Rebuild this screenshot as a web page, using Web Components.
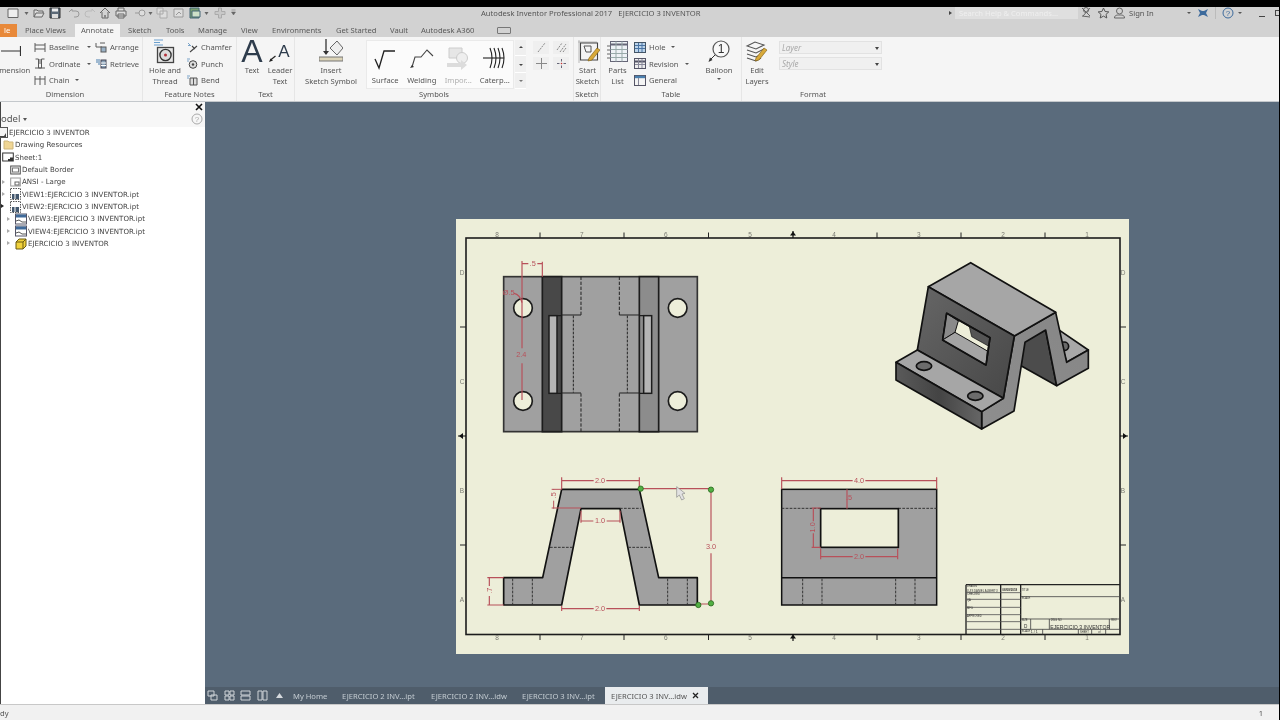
<!DOCTYPE html>
<html>
<head>
<meta charset="utf-8">
<title>Autodesk Inventor Professional 2017</title>
<style>
  html, body { margin: 0; padding: 0; background: #000; overflow: hidden; }
</style>
</head>
<body>
<inv-app>
  <inv-titlebar slot="title"></inv-titlebar>
  <inv-tabs slot="tabs"></inv-tabs>
  <inv-ribbon slot="ribbon">
    <inv-panel label="Dimension" labelw="130" style="width:143px">
      <inv-big label="Dimension" style="width:38px;margin-left:-8px"><inv-icon name="dimension"></inv-icon></inv-big>
      <inv-stack style="width:61px;margin-left:4px">
        <inv-small label="Baseline" icon="baseline" caret="8"></inv-small>
        <inv-small label="Ordinate" icon="ordinate" caret="6"></inv-small>
        <inv-small label="Chain" icon="chain" caret="6"></inv-small>
      </inv-stack>
      <inv-stack>
        <inv-small label="Arrange" icon="arrange"></inv-small>
        <inv-small label="Retrieve" icon="retrieve"></inv-small>
      </inv-stack>
    </inv-panel>
    <inv-panel label="Feature Notes" style="width:94px">
      <inv-big label="Hole and|Thread" style="width:44px"><inv-icon name="hole"></inv-icon></inv-big>
      <inv-stack>
        <inv-small label="Chamfer" icon="chamfer"></inv-small>
        <inv-small label="Punch" icon="punch"></inv-small>
        <inv-small label="Bend" icon="bend"></inv-small>
      </inv-stack>
    </inv-panel>
    <inv-panel label="Text" style="width:58px">
      <inv-big label="Text" style="width:30px"><inv-bigletter></inv-bigletter></inv-big>
      <inv-big label="Leader|Text" style="width:26px"><inv-icon name="leader"></inv-icon></inv-big>
    </inv-panel>
    <inv-panel label="Symbols" style="width:279px">
      <inv-big label="Insert|Sketch Symbol" style="width:70px;margin-left:1px"><inv-icon name="symbol"></inv-icon></inv-big>
      <inv-gallery>
        <inv-gallery-item label="Surface" icon="surface"></inv-gallery-item>
        <inv-gallery-item label="Welding" icon="welding"></inv-gallery-item>
        <inv-gallery-item label="Impor..." icon="import" disabled></inv-gallery-item>
        <inv-gallery-item label="Caterp..." icon="caterpillar"></inv-gallery-item>
      </inv-gallery>
      <inv-minigrid>
        <inv-icon name="mini1"></inv-icon><inv-icon name="mini2"></inv-icon>
        <inv-icon name="mini3"></inv-icon><inv-icon name="mini4"></inv-icon>
      </inv-minigrid>
    </inv-panel>
    <inv-panel label="Sketch" style="width:27px">
      <inv-big label="Start|Sketch" style="width:27px"><inv-icon name="sketch"></inv-icon></inv-big>
    </inv-panel>
    <inv-panel label="Table" style="width:141px">
      <inv-big label="Parts|List" style="width:33px"><inv-icon name="parts"></inv-icon></inv-big>
      <inv-stack style="width:65px">
        <inv-small label="Hole" icon="tblhole" caret="6"></inv-small>
        <inv-small label="Revision" icon="tblrev" caret="6"></inv-small>
        <inv-small label="General" icon="tblgen"></inv-small>
      </inv-stack>
      <inv-big label="Balloon" caret style="width:40px"><inv-icon name="balloon"></inv-icon></inv-big>
    </inv-panel>
    <inv-panel label="Format" style="width:142px;border:0">
      <inv-big label="Edit|Layers" style="width:30px"><inv-icon name="layers"></inv-icon></inv-big>
      <inv-stack combo style="margin-left:7px">
        <inv-combo label="Layer"></inv-combo>
        <inv-combo label="Style"></inv-combo>
      </inv-stack>
    </inv-panel>
  </inv-ribbon>
  <inv-browser slot="browser">
    <inv-row text="EJERCICIO 3 INVENTOR" indent="-2" icon="tdoc"></inv-row>
    <inv-row text="Drawing Resources" indent="2" icon="tfolder"></inv-row>
    <inv-row text="Sheet:1" indent="1" icon="tsheet"></inv-row>
    <inv-row text="Default Border" indent="9" icon="tborder"></inv-row>
    <inv-row text="ANSI - Large" indent="9" icon="tansi" exp="open"></inv-row>
    <inv-row text="VIEW1:EJERCICIO 3 INVENTOR.ipt" indent="9" icon="tview" exp="open"></inv-row>
    <inv-row text="VIEW2:EJERCICIO 3 INVENTOR.ipt" indent="9" icon="tview" exp="filled"></inv-row>
    <inv-row text="VIEW3:EJERCICIO 3 INVENTOR.ipt" indent="14" icon="tview2" exp="open"></inv-row>
    <inv-row text="VIEW4:EJERCICIO 3 INVENTOR.ipt" indent="14" icon="tview2" exp="open"></inv-row>
    <inv-row text="EJERCICIO 3 INVENTOR" indent="14" icon="tpart" exp="open"></inv-row>
  </inv-browser>
  <inv-canvas slot="canvas">
    <inv-sheet></inv-sheet>
    <inv-doctabs slot="tabs">
      <inv-doctab style="width:49px">My Home</inv-doctab>
      <inv-doctab style="width:89px">EJERCICIO 2 INV...ipt</inv-doctab>
      <inv-doctab style="width:91px">EJERCICIO 2 INV...idw</inv-doctab>
      <inv-doctab style="width:88px">EJERCICIO 3 INV...ipt</inv-doctab>
      <inv-doctab active style="width:103px">EJERCICIO 3 INV...idw</inv-doctab>
    </inv-doctabs>
  </inv-canvas>
  <inv-status slot="status"></inv-status>
</inv-app>

<script>
const UI_FONT = `"Noto Sans", "Liberation Sans", sans-serif`;
const UI_SIZE = "7.6px";

/*************************** ICONS ***************************/
const G = "#5a5a5a";
const B = "#4a7fae";
const ICONS = {
  dimension: [20, 14, `<path d="M0 7h19M19.5 2v10" stroke="#333" stroke-width="1.2" fill="none"/>`],
  baseline: [12, 11, `<path d="M1 1v9M11 1v9M1 3h10M1 7h10" stroke="${G}" fill="none"/>`],
  ordinate: [12, 11, `<path d="M1.5 1h3v9h3V1h3M1 10h10M6 1v5" stroke="${G}" fill="none"/>`],
  chain: [12, 11, `<path d="M1 1v9M6 1v9M11 1v9M1 4h10" stroke="${G}" fill="none"/>`],
  arrange: [12, 11, `<path d="M1 1v4h6M5 1h5" stroke="${G}" fill="none"/><rect x="6" y="5" width="5" height="5" fill="#9bb3c8" stroke="${G}"/>`],
  retrieve: [12, 11, `<path d="M1 2h4M1 4h4M3 6h2" stroke="${B}" stroke-width="1.2"/><rect x="6" y="2" width="5" height="8" fill="#8aa2b8" stroke="#445"/><path d="M6 5h5M6 7.5h5" stroke="#fff"/>`],
  hole: [24, 27, `<path d="M1 2h9M1 4.5h6M1 7h9" stroke="#6aa0cf" stroke-width="1.2"/><rect x="4.5" y="9.5" width="16" height="15" fill="#e5e5e5" stroke="#444" stroke-width="1.3"/><circle cx="12.5" cy="17" r="5.6" fill="#ddd" stroke="#333" stroke-width="1.4"/><circle cx="12.5" cy="17" r="1.5" fill="#b5303a"/>`],
  chamfer: [11, 11, `<path d="M1 1l2 2M1 3.5h3" stroke="#7aa3c8"/><path d="M3 10l7-6M5 4l3 3" stroke="#444" stroke-width="1.1" fill="none"/>`],
  punch: [11, 11, `<path d="M0 1h3M0 3h2" stroke="#7aa3c8"/><circle cx="6" cy="6.5" r="3.8" fill="#ddd" stroke="#444"/><circle cx="6" cy="6.5" r="1.2" fill="#444"/>`],
  bend: [11, 11, `<path d="M0 1h3M0 3h2" stroke="#7aa3c8"/><path d="M3 3h7v7H3zM6.5 3v7" stroke="#555" fill="#ddd"/>`],
  leader: [24, 27, `<path d="M2.5 22l5-4" stroke="#222" stroke-width="1.2"/><path d="M1 24l1.500-3.500 2.500 2z" fill="#222"/><text x="16" y="19" font-size="17" text-anchor="middle" font-family="Liberation Sans" fill="#2e3c4c">A</text>`],
  symbol: [24, 27, `<path d="M7 1v15" stroke="#333" stroke-width="1.3"/><path d="M4 13l3 4 3-4" fill="#333"/><path d="M11 10l7-7 6 7-6 7z" fill="#eee" stroke="#666"/><rect x="0" y="19" width="24" height="4" fill="#dcd4b8" stroke="#777"/>`],
  surface: [24, 24, `<path d="M2 13l4 9 5-17h11" stroke="#222" stroke-width="1.3" fill="none"/>`],
  welding: [24, 24, `<path d="M2 21l3-10h6l6-7 6 6" stroke="#444" stroke-width="1.1" fill="none"/><path d="M0 22l2-3 2 2z" fill="#333"/>`],
  import: [24, 24, `<path d="M3 2h13v10H3z" fill="#e6e6e6" stroke="#ccc"/><circle cx="16" cy="12" r="5.5" fill="#eee" stroke="#ccc"/><path d="M1 17h14v-3l6 5-6 5v-3H1z" fill="#dcdcdc"/>`],
  caterpillar: [24, 24, `<path d="M0 12h21" stroke="#222" stroke-width="1.1"/><path d="M7 2q4 10 0 20M11 2q4 10 0 20M15 2q4 10 0 20M19 2q4 10 0 20" stroke="#222" stroke-width="1.1" fill="none"/>`],
  mini1: [11, 11, `<path d="M2 10l7-9" stroke="#888" stroke-dasharray="2 1"/>`],
  mini2: [11, 11, `<path d="M1 8l5-7M4 10l6-8M7 10l3-4" stroke="#888" stroke-dasharray="2 1"/>`],
  mini3: [11, 11, `<path d="M5.5 0v11M0 5.5h11" stroke="#888"/>`],
  mini4: [11, 11, `<path d="M5.5 1v2.5M5.5 7.5V10M1 5.5h2.5M7.5 5.5H10" stroke="#667"/><circle cx="5.5" cy="5.5" r=".8" fill="#c33"/>`],
  sketch: [24, 27, `<path d="M2 4h19M3 2v23" stroke="#aaa" stroke-width=".8"/><path d="M4.5 5h17v17h-17z" fill="#f4f4f4" stroke="#444" stroke-width="1.1"/><path d="M8 8h7v6H10z" fill="none" stroke="#555"/><path d="M13 20l8-10 3 2-8 10-4 1z" fill="#d8a93a" stroke="#7a5a10" stroke-width=".6"/>`],
  parts: [21, 25, `<path d="M0 7h3M0 11h3M0 15h3M0 19h3" stroke="#666"/><rect x="3.5" y="2.500" width="17" height="20" fill="#eef2f6" stroke="#667"/><path d="M3 5.500h18" stroke="#667" stroke-width="2"/><path d="M3.500 10.500h17M3.500 14.500h17M3.500 18.500h17M9 2.500v20M15 2.500v20" stroke="#9aa"/>`],
  tblhole: [12, 11, `<rect x=".5" y=".5" width="11" height="10" fill="#bcd4ea" stroke="#456"/><path d="M1 3.5h10M1 6.5h10M4.5 1v9M8 1v9" stroke="#4a74a4"/>`],
  tblrev: [12, 11, `<rect x=".5" y=".5" width="11" height="10" fill="#eee" stroke="#556"/><path d="M1 3.5h10" stroke="#556" stroke-width="2"/><path d="M1 6.5h10M4.5 1v9M8 1v9" stroke="#889"/>`],
  tblgen: [12, 11, `<rect x=".5" y=".5" width="11" height="10" fill="#f4f4f4" stroke="#556"/><path d="M1 2h10" stroke="#4a7fae" stroke-width="2.4"/><path d="M4.5 3v7" stroke="#889"/>`],
  balloon: [26, 27, `<circle cx="15" cy="11" r="8" fill="#f8f8f8" stroke="#555" stroke-width="1.2"/><text x="15" y="15" font-size="12" font-family="Liberation Sans" text-anchor="middle" fill="#333">1</text><path d="M9 17l-4 4" stroke="#333"/><path d="M2.500 24l1.500-4.500 2.500 2.500z" fill="#333"/>`],
  layers: [24, 27, `<path d="M2 8l8-4 9 3-8 4zM2 12l9 3 8-4M2 16l9 3 8-4M2 20l9 3 5-3" fill="none" stroke="#555" stroke-width="1.1"/><path d="M11 20l8-10 3 2-8 10-4 1z" fill="#d8a93a" stroke="#7a5a10" stroke-width=".6"/>`],
  tdoc: [9, 11, `<rect x=".5" y=".5" width="8" height="10" fill="#f4f4f4" stroke="#555"/><path d="M1 9h4l2-3v4H1z" fill="#444"/>`],
  tfolder: [11, 11, `<path d="M1 2h4l1 1h4v7H1z" fill="#f0d694" stroke="#cdb57a"/>`],
  tsheet: [12, 10, `<rect x=".7" y="1" width="10.6" height="8" fill="#fff" stroke="#333" stroke-width="1"/><path d="M6 9V7h2V5.500h3V9z" fill="#333"/>`],
  tborder: [11, 10, `<rect x=".7" y="1" width="9.6" height="8" fill="#eee" stroke="#555"/><rect x="2.500" y="3" width="6" height="4" fill="#fff" stroke="#777"/>`],
  tansi: [11, 10, `<rect x=".7" y="1" width="9.600" height="8" fill="#fff" stroke="#999"/><rect x="5" y="5" width="4" height="3" fill="none" stroke="#666"/>`],
  tview: [11, 12, `<rect x=".5" y=".5" width="10" height="11" fill="#fff" stroke="#555" stroke-dasharray="1.500 1"/><path d="M2 6h7v5H2z" fill="#44586e"/><path d="M5 6v5" stroke="#fff"/>`],
  tview2: [12, 12, `<rect x=".5" y="1" width="11" height="10" fill="#fff" stroke="#556"/><path d="M1 1.500h10v3H1z" fill="#3f6a9a"/><path d="M1 8l3-1 3 2h4" stroke="#555" fill="none"/>`],
  tpart: [12, 12, `<path d="M1 4l3-3h7v7l-3 3H1z" fill="#f1d23c" stroke="#6a5a10"/><path d="M1 4h7v7M8 4l3-3" fill="none" stroke="#6a5a10"/>`],
  close: [8, 8, `<path d="M1 1l6 6M7 1l-6 6" stroke="#111" stroke-width="1.600"/>`],
  help: [12, 12, `<circle cx="6" cy="6" r="5" fill="none" stroke="#aaa"/><text x="6" y="9" font-size="8" text-anchor="middle" font-family="Liberation Sans" fill="#aaa">?</text>`],
};

class InvElement extends HTMLElement {
  constructor() {
    super();
    this.attachShadow({ mode: "open" });
  }
  get style_() { return ""; }
  get markup() { return "<slot></slot>"; }
  connectedCallback() {
    this.shadowRoot.innerHTML = `<style>${this.style_}</style>${this.markup}`;
  }
}

const svgIcon = (name) => {
  const [w, h, inner] = ICONS[name];
  return `<svg width="${w}" height="${h}" viewBox="0 0 ${w} ${h}" style="display:block;flex:none">${inner}</svg>`;
};

customElements.define("inv-icon", class extends InvElement {
  get style_() { return `:host{display:block;flex:none}`; }
  get markup() { return svgIcon(this.getAttribute("name")); }
});

/*************************** APP SHELL ***************************/
customElements.define("inv-app", class extends InvElement {
  get style_() {
    return `
      :host {
        display: grid;
        width: 1279px;
        height: 720px;
        grid-template-columns: 205px 1fr;
        grid-template-rows: 7px 17px 13px 65px 1fr 16px;
        grid-template-areas: "top top" "title title" "tabs tabs" "ribbon ribbon" "browser canvas" "status status";
        font-family: ${UI_FONT};
        color: #4a4a4a;
        filter: blur(.35px);
        background: #000;
      }
      ::slotted([slot=title]) { grid-area: title; }
      ::slotted([slot=tabs]) { grid-area: tabs; }
      ::slotted([slot=ribbon]) { grid-area: ribbon; }
      ::slotted([slot=browser]) { grid-area: browser; }
      ::slotted([slot=canvas]) { grid-area: canvas; }
      ::slotted([slot=status]) { grid-area: status; }
    `;
  }
  get markup() {
    return `<slot name="title"></slot><slot name="tabs"></slot><slot name="ribbon"></slot>
      <slot name="browser"></slot><slot name="canvas"></slot><slot name="status"></slot>`;
  }
});

customElements.define("inv-titlebar", class extends InvElement {
  get style_() {
    return `
      :host { display: flex; align-items: center; background: #d2d2d2; font-size: ${UI_SIZE}; color: #555; padding-bottom: 5px; box-sizing: border-box; overflow: hidden; }
      .qat { display: flex; align-items: center; width: 481px; box-sizing: border-box; flex: none; }
      .qat svg { display: block; flex: none; }
      .title { width: 468px; flex: none; white-space: pre; }
      .search { width: 123px; height: 12px; background: #dfdfdf; color: #efefef; padding-left: 4px; box-sizing: border-box; line-height: 12px; margin-left: 3px; flex: none; }
      .arrow { width: 0; height: 0; border-left: 3px solid #444; border-top: 2.500px solid transparent; border-bottom: 2.500px solid transparent; flex: none; }
      .right { display: flex; align-items: center; flex: none; white-space: nowrap; }
      .right svg { display: block; flex: none; }
      .dot { width: 0; height: 0; border: 2px solid transparent; border-top: 2.500px solid #555; margin-top: 2px; flex: none; }
    `;
  }
  get markup() {
    const s = (w, ml, inner) => `<svg width="${w}" height="12" viewBox="0 0 ${w} 12" style="margin-left:${ml}px">${inner}</svg>`;
    const car = (ml) => s(5, ml, `<path d="M.5 5h4L2.500 8z" fill="#666"/>`);
    return `
      <div class="qat">
        ${s(12, 7, `<path d="M1 2h10v8.500H1z" fill="#eee" stroke="#666"/>`)}${car(4.5)}
        ${s(12, 4.5, `<path d="M1 10V3h3l1 1h5v2M1 10l2-4h8l-2 4z" fill="#ddd" stroke="#666"/>`)}
        ${s(12, 4, `<path d="M1 1h10v10H1z" fill="#5c6a78" stroke="#333"/><path d="M3 1.500h6v3H3z" fill="#eee"/><path d="M3 7h6v4H3z" fill="#ddd"/>`)}
        ${s(12, 7, `<path d="M1 5l3-3v2h4a3 3 0 010 6H6" fill="none" stroke="#999"/>`)}
        ${s(12, 4, `<path d="M11 5L8 2v2H4a3 3 0 000 6h2" fill="none" stroke="#bbb"/>`)}
        ${s(12, 3, `<path d="M1 6l5-5 5 5M3 5v6h6V5" fill="none" stroke="#666"/><path d="M5 11V8h2v3" fill="#888"/>`)}
        ${s(12, 4, `<path d="M3 4V1h6v3M1 4h10v5H1zM3 7h6v4H3z" fill="#ddd" stroke="#666"/>`)}
        ${s(12, 7, `<path d="M1 6h4" stroke="#999"/><circle cx="8" cy="6" r="3" fill="#ddd" stroke="#999"/>`)}${car(1.5)}
        ${s(12, 3.5, `<path d="M1 1h6v6H1zM4 4h7v7H4z" fill="#ddd" stroke="#aaa"/>`)}
        ${s(12, 5, `<path d="M1 2h9v8H1z" fill="#ddd" stroke="#999"/><path d="M3 8l3-3 2 2" fill="none" stroke="#999"/>`)}
        ${s(12, 4, `<path d="M1 1h9v10H1z" fill="#7aa070" stroke="#467"/><path d="M3 4h8v6H3z" fill="#cde0c8" stroke="#467"/>`)}${car(2.5)}
        ${s(12, 5.5, `<path d="M4.500 1h3v3.500H11v3H7.500V11h-3V7.500H1v-3h3.500z" fill="#c8c8c8" stroke="#aaa"/>`)}
        ${s(5, 4.5, `<path d="M.5 3h4M.5 5h4L2.500 8z" fill="#666" stroke="#666" stroke-width=".5"/>`)}
      </div>
      <div class="title">Autodesk Inventor Professional 2017   EJERCICIO 3 INVENTOR</div>
      <div class="arrow"></div>
      <div class="search">Search Help &amp; Commands...</div>
      <div class="right">
        ${s(13, 1.5, `<circle cx="6" cy="3" r="2.500" fill="none" stroke="#666"/><path d="M2 1l8 8M2 9l8 1M10 1L3 9" stroke="#666" fill="none"/>`)}
        ${s(13, 4, `<path d="M6.500 1l1.600 3.500 3.700.4-2.800 2.500.8 3.600-3.300-1.900-3.300 1.900.8-3.600L1.200 4.900l3.700-.4z" fill="none" stroke="#555"/>`)}
        ${s(13, 3, `<circle cx="6.500" cy="4" r="3" fill="none" stroke="#666"/><path d="M1.500 11c0-3 2.500-3 5-3s5 0 5 3z" fill="none" stroke="#666"/>`)}
        <span style="margin-left:3.500px;width:58px">Sign In</span>
        <span class="dot"></span>
        ${s(12, 6, `<path d="M1 2l4 2 2 0 4-2-2 4 2 4-4-2H5l-4 2 2-4z" fill="#3c6a9c"/>`)}
        <span style="width:1px;height:12px;background:#bbb;margin-left:6px"></span>
        ${s(12, 6, `<circle cx="6" cy="6" r="5" fill="none" stroke="#3c6a9c"/><text x="6" y="9" font-size="8" text-anchor="middle" fill="#3c6a9c" font-family="Liberation Sans">?</text>`)}
        <span class="dot" style="margin-left:4px"></span>
        <span style="width:6px;height:1px;background:#444;margin:6px 0 0 17px"></span>
        <span style="width:5px;height:6px;border:1px solid #444;margin-left:10px;box-sizing:border-box"></span>
      </div>
    `;
  }
});

customElements.define("inv-tabs", class extends InvElement {
  get style_() {
    return `
      :host { display: flex; background: #d2d2d2; font-size: ${UI_SIZE}; color: #5a5a5a; align-items: stretch; line-height: 12px; white-space: nowrap; }
      .file { width: 17px; background: #e8893a; color: #fff; padding-left: 4px; box-sizing: border-box; margin-right: 8px; }
      span { display: block; }
      .on { background: #f5f5f5; padding: 0 6px; }
      .icon { margin: 3px 0 0 21px; width: 14px; height: 7px; border: 1px solid #777; border-radius: 1px; box-sizing: border-box; }
    `;
  }
  get markup() {
    const tabs = [["Place Views", 50, 0], ["Annotate", 45, 0, true], ["Sketch", 38, 8], ["Tools", 32, 0], ["Manage", 43, 0], ["View", 31, 0], ["Environments", 64, 0], ["Get Started", 54, 0], ["Vault", 31, 0], ["Autodesk A360", 55, 0]];
    return `<span class="file">le</span>` + tabs.map(([t, w, ml, on]) =>
      `<span class="${on ? "on" : ""}" style="width:${w}px;box-sizing:border-box;${ml ? `margin-left:${ml}px` : ""}">${t}</span>`).join("")
      + `<span class="icon"></span>`;
  }
});

/*************************** RIBBON ***************************/
customElements.define("inv-ribbon", class extends InvElement {
  get style_() {
    return `:host { display: flex; background: #f5f5f5; border-bottom: 1px solid #c4c8cc; box-sizing: border-box; overflow: hidden; }`;
  }
});

customElements.define("inv-panel", class extends InvElement {
  get style_() {
    return `
      :host { display: grid; grid-template-rows: 52px 12px; flex: none; box-sizing: border-box; border-right: 1px solid #e6e6e6; }
      .body { display: flex; min-width: 0; }
      .label { text-align: center; font-size: ${UI_SIZE}; line-height: 11px; color: #555; white-space: nowrap; }
    `;
  }
  get markup() {
    const lw = this.getAttribute("labelw");
    return `<div class="body"><slot></slot></div><div class="label" ${lw ? `style="width:${lw}px"` : ""}>${this.getAttribute("label")}</div>`;
  }
});

customElements.define("inv-big", class extends InvElement {
  get style_() {
    return `
      :host { display: flex; flex-direction: column; align-items: center; flex: none; font-size: ${UI_SIZE}; line-height: 10.500px; text-align: center; color: #555; white-space: nowrap; }
      .ico { height: 28px; display: flex; align-items: center; justify-content: center; }
      .car { width: 0; height: 0; border: 2px solid transparent; border-top: 2.500px solid #555; margin-top: 2px; }
    `;
  }
  get markup() {
    const caret = this.hasAttribute("caret") ? `<div class="car"></div>` : "";
    const label = this.getAttribute("label").split("|").join("<br>");
    return `<div class="ico"><slot></slot></div><div>${label}</div>${caret}`;
  }
});

customElements.define("inv-bigletter", class extends InvElement {
  get style_() { return `:host{display:block;font:32px/30px "Liberation Sans",sans-serif;color:#2e3c4c}`; }
  get markup() { return "A"; }
});

customElements.define("inv-stack", class extends InvElement {
  get style_() {
    return `:host { display: flex; flex-direction: column; flex: none; padding-top: 2px; }
      :host([combo]) { gap: 3px; padding-top: 4px; }`;
  }
});

customElements.define("inv-small", class extends InvElement {
  get style_() {
    return `
      :host { display: flex; align-items: center; height: 16.500px; gap: 3px; font-size: ${UI_SIZE}; color: #555; white-space: nowrap; }
      .car { width: 0; height: 0; border: 2px solid transparent; border-top: 2.500px solid #555; margin-top: 2px; }
    `;
  }
  get markup() {
    const caret = this.getAttribute("caret");
    return svgIcon(this.getAttribute("icon")) + `<span>${this.getAttribute("label")}</span>`
      + (caret ? `<span class="car" style="margin-left:${caret - 3}px"></span>` : "");
  }
});

customElements.define("inv-gallery", class extends InvElement {
  get style_() {
    return `
      :host { display: flex; flex: none; }
      .box { width: 148px; height: 49px; margin-top: 3px; background: #fbfbfb; border: 1px solid #eaeaea; box-sizing: border-box; display: flex; }
      .scroll { width: 11px; height: 49px; margin: 3px 0 0 1px; display: grid; grid-template-rows: 16px 17px 16px; background: #efefef; }
      .scroll i { display: flex; align-items: center; justify-content: center; border-bottom: 1px solid #fff; font-style: normal; }
      .t { width: 0; height: 0; border: 2.500px solid transparent; }
    `;
  }
  get markup() {
    return `<div class="box"><slot></slot></div>
      <div class="scroll">
        <i><b class="t" style="border-bottom-color:#444;margin-top:-3px"></b></i>
        <i><b class="t" style="border-top-color:#444;margin-top:3px"></b></i>
        <i><b class="t" style="border-top-color:#777;margin-top:3px"></b></i>
      </div>`;
  }
});

customElements.define("inv-gallery-item", class extends InvElement {
  get style_() {
    return `
      :host { display: flex; flex-direction: column; align-items: center; width: 37px; font-size: ${UI_SIZE}; color: #555; white-space: nowrap; }
      :host([disabled]) { color: #b0b0b0; }
      .i { height: 34px; display: flex; align-items: center; }
    `;
  }
  get markup() {
    return `<div class="i">${svgIcon(this.getAttribute("icon"))}</div><div>${this.getAttribute("label")}</div>`;
  }
});

customElements.define("inv-minigrid", class extends InvElement {
  get style_() {
    return `
      :host { display: grid; grid-template-columns: 16px 16px; gap: 3px 4px; align-self: start; margin: 4px 0 0 7px; }
      ::slotted(*) { padding: 1px 2.500px; background: #efefef; }
    `;
  }
});

customElements.define("inv-combo", class extends InvElement {
  get style_() {
    return `
      :host { display: flex; align-items: center; justify-content: space-between; width: 103px; height: 13px; box-sizing: border-box; border: 1px solid #e2e2e2; background: #f0f0f0; padding: 0 2px; font-size: 8px; font-style: italic; color: #aaa; }
      i { width: 0; height: 0; border: 2.500px solid transparent; border-top: 3px solid #444; margin-top: 3px; }
    `;
  }
  get markup() { return `<span>${this.getAttribute("label")}</span><i></i>`; }
});

/*************************** BROWSER ***************************/
customElements.define("inv-browser", class extends InvElement {
  get style_() {
    return `
      :host { display: flex; flex-direction: column; background: #fff; border-left: 1px solid #444; box-sizing: border-box; font-family: "DejaVu Sans", sans-serif; position: relative; }
      .close { position: absolute; left: 194px; top: 1px; }
      .head { height: 24.500px; background: #f7f7f7; display: flex; align-items: flex-end; font: 9.5px/16px ${UI_FONT}; color: #555; justify-content: space-between; padding-right: 2px; box-sizing: border-box; }
      .head span { display: flex; align-items: center; gap: 3px; }
      .head i { width: 0; height: 0; border: 2.500px solid transparent; border-top: 3px solid #555; margin-top: 3px; }
      .head svg { margin-bottom: 2px; }
    `;
  }
  get markup() {
    return `<div class="close">${svgIcon("close")}</div>
      <div class="head"><span>odel<i></i></span>${svgIcon("help")}</div>
      <div><slot></slot></div>`;
  }
});

customElements.define("inv-row", class extends InvElement {
  get style_() {
    return `
      :host { display: flex; align-items: center; height: 12.330px; font-size: 7.050px; color: #444; white-space: nowrap; }
      .ind { flex: none; position: relative; height: 100%; }
      .exp { position: absolute; top: 4px; right: 5.500px; width: 0; height: 0; border-left: 3.500px solid #aaa; border-top: 2.500px solid transparent; border-bottom: 2.500px solid transparent; }
      .exp.filled { border-left-color: #222; right: 6.500px; }
      .t { margin-left: 1px; }
    `;
  }
  get markup() {
    const ind = +this.getAttribute("indent");
    const exp = this.getAttribute("exp");
    return `<div class="ind" style="width:${Math.max(ind, 0)}px;margin-left:${Math.min(ind, 0)}px">${exp ? `<div class="exp ${exp}"></div>` : ""}</div>
      ${svgIcon(this.getAttribute("icon"))}<span class="t">${this.getAttribute("text")}</span>`;
  }
});

/*************************** CANVAS ***************************/
customElements.define("inv-canvas", class extends InvElement {
  get style_() {
    return `
      :host { display: flex; flex-direction: column; justify-content: flex-end; background: #5a6b7c; position: relative; min-height: 0; }
    `;
  }
  get markup() { return `<slot></slot><slot name="tabs"></slot>`; }
});

customElements.define("inv-doctabs", class extends InvElement {
  get style_() {
    return `
      :host { display: flex; align-items: stretch; height: 17px; background: #4f5d6b; font-size: ${UI_SIZE}; color: #c4ccd2; flex: none; }
      .tools { display: flex; align-items: center; gap: 5.500px; padding-left: 2px; width: 83px; box-sizing: border-box; flex: none; }
      .tools svg { display: block; flex: none; }
      .sep { width: 1px; height: 13px; background: #7a8794; margin-left: 3px; }
    `;
  }
  get markup() {
    const s = (inner) => `<svg width="11" height="11" viewBox="0 0 11 11" fill="none" stroke="#cfd4d8">${inner}</svg>`;
    return `<div class="tools">
        ${s(`<path d="M1 1h6v5H1zM4 5h6v5H4z"/>`)}
        ${s(`<path d="M1 1h4v4H1zM6 1h4v4H6zM1 6h4v4H1zM6 6h4v4H6z"/>`)}
        ${s(`<path d="M1 1h9v4H1zM1 6h9v4H1z"/>`)}
        ${s(`<path d="M1 1h4v9H1zM6 1h4v9H6z"/>`)}
        <svg width="7" height="7" viewBox="0 0 7 7" style="margin-left:3px"><path d="M3.500 1L7 6H0z" fill="#d6dade"/></svg>
        <span class="sep"></span>
      </div><slot></slot>`;
  }
});

customElements.define("inv-doctab", class extends InvElement {
  get style_() {
    return `
      :host { display: flex; align-items: center; padding-left: 5px; box-sizing: border-box; white-space: nowrap; flex: none; }
      :host([active]) { background: #e9ecee; color: #555; padding-left: 6px; }
      svg { margin-left: 5px; }
    `;
  }
  get markup() {
    const x = this.hasAttribute("active")
      ? `<svg width="7" height="7" viewBox="0 0 7 7"><path d="M1 1l5 5M6 1L1 6" stroke="#222" stroke-width="1.300"/></svg>` : "";
    return `<slot></slot>${x}`;
  }
});

/*************************** DRAWING SHEET ***************************/
const RED = "#b8505a";
const SHEET = "#edeed9";
const redText = (x, y, t, extra = "") =>
  `<text x="${x}" y="${y}" font-size="22" fill="${RED}" text-anchor="middle" dominant-baseline="middle" ${extra}>${t}</text>`;

const rulerMarks = () => {
  const nums = [497, 581.7, 665.7, 750, 834, 918.7, 1003, 1087];
  const ticks = [540, 624, 708.500, 877, 961, 1045];
  let out = "";
  nums.forEach((x, i) => {
    out += `<text x="${x}" y="237" class="rl">${8 - i}</text><text x="${x}" y="639.500" class="rl">${8 - i}</text>`;
  });
  ticks.forEach((x) => { out += `<path d="M${x} 232.500V238M${x} 634V640" stroke="#222" stroke-width="1"/>`; });
  [["D", 274.5], ["C", 383.5], ["B", 492.5], ["A", 602]].forEach(([l, y]) => {
    out += `<text x="462" y="${y}" class="rl">${l}</text><text x="1123" y="${y}" class="rl">${l}</text>`;
  });
  [327, 545].forEach((y) => { out += `<path d="M460 ${y}H466M1120 ${y}H1126" stroke="#222"/>`; });
  out += `<path d="M458 436h8M1120 436h8" stroke="#111" stroke-width="1.200"/>
    <path d="M459 436l4-3v6zM1127 436l-4-3v6z" fill="#111"/>
    <path d="M793 231v7M793 634v7" stroke="#111" stroke-width="1.200"/>
    <path d="M793 231.500l-3 4h6zM793 634.500l-3 4h6z" fill="#111"/>`;
  return out;
};

const topView = `
  <g transform="translate(455 215) scale(.33333)" stroke="#1c1c1c" stroke-width="5">
    <rect x="146" y="185" width="581" height="465" fill="#a0a0a0" stroke="#333"/>
    <rect x="262" y="185" width="58" height="465" fill="#484848"/>
    <rect x="553" y="185" width="58" height="465" fill="#8c8c8c"/>
    <g fill="${SHEET}" stroke-width="5">
      <circle cx="204" cy="279" r="28"/><circle cx="204" cy="558" r="28"/>
      <circle cx="668" cy="279" r="28"/><circle cx="668" cy="558" r="28"/>
    </g>
    <g fill="none" stroke-width="3" stroke="#222">
      <path d="M378 185V300M378 535V650M493 185V300M493 535V650" stroke-dasharray="10 5"/>
      <path d="M355 302V533M517 302V533" stroke-dasharray="8 4"/>
      <path d="M320 300H378M320 534H378M493 300H553M493 534H553"/>
    </g>
    <rect x="282" y="302" width="24" height="233" fill="#b4b4b4" stroke-width="4.500"/>
    <rect x="566" y="302" width="24" height="233" fill="#b4b4b4" stroke-width="4.500"/>
    <path d="M306 302H320M306 535H320M553 302H566M553 535H566" stroke-width="4"/>
    <g stroke="${RED}" fill="none" stroke-width="3.500">
      <path d="M201 138V400M201 445V555M262 140V185M201 146H220M247 146H262"/>
      <path d="M177 235q18 3 24 28"/>
    </g>
    <g font-family="Liberation Sans" stroke="none">
      ${redText(233, 146, ".5")}${redText(161, 233, "&#216;.5")}${redText(199, 421, "2.4")}
    </g>
  </g>`;

const isoView = `
  <g transform="translate(860 215) scale(.33333)" stroke="#111" stroke-width="5" stroke-linejoin="round">
    <path d="M490 380L557 345 590 512 483 452z" fill="#4c4c4c"/>
    <path d="M590 340L685 405 620 442z" fill="#a8a8a8"/>
    <ellipse cx="612" cy="394" rx="14" ry="13" fill="#6a6a6a"/>
    <path d="M587 292L620 442 685 405V460L590 512 557 345 495 382 462 588 365 642V590L430 550 463 363z" fill="url(#endf)"/>
    <path d="M332 143L587 292 463 363 205 215z" fill="#a6a6a6"/>
    <path d="M205 215L463 363 430 550 172 405z" fill="url(#wall)"/>
    <path d="M108 442L172 405 430 550 365 590z" fill="#a6a6a6"/>
    <path d="M108 442L365 590V642L108 495z" fill="url(#foot)"/>
    <ellipse cx="192" cy="453" rx="23" ry="13" fill="#6c6c6c"/>
    <ellipse cx="346" cy="543" rx="23" ry="13" fill="#6c6c6c"/>
    <path d="M260 295L390 368 378 450 248 375z" fill="${SHEET}"/>
    <path d="M260 295L295 318 285 352 248 375z" fill="#8a8a8a" stroke-width="3"/>
    <path d="M248 375L285 352 382 408 378 450z" fill="#a4a4a4" stroke-width="3"/>
    <path d="M328 335L390 368 385 393 335 365z" fill="#555" stroke-width="2"/>
    <path d="M260 295L390 368 378 450 248 375z" fill="none"/>
  </g>`;

const frontView = `
  <g transform="translate(455 440) scale(.33333)">
    <path d="M146 413H263L320 148H553L611 413H727V495H553L495 206H378L320 495H146z" fill="#a0a0a0" stroke="#111" stroke-width="5" stroke-linejoin="round"/>
    <path d="M173 416V493M232 416V493M638 416V493M697 416V493M285 322H355M520 322H585M495 205H557" stroke="#333" stroke-width="3" stroke-dasharray="8 4" fill="none"/>
    <g stroke="${RED}" stroke-width="3.500" fill="none">
      <path d="M320 112V148M553 112V148M320 122H416M454 122H553"/>
      <path d="M290 148H320M290 204H378M296 148V150M296 182V206" stroke-width="3"/>
      <path d="M378 243H415M455 243H495M378 212V248M495 212V248"/>
      <path d="M320 498V513M553 498V513M320 506H416M454 506H553"/>
      <path d="M97 413H146M97 495H146M103 413V438M103 468V495"/>
      <path d="M557 146H768M768 149V303M768 340V492M727 492H768"/>
    </g>
    <g font-family="Liberation Sans">
      ${redText(435, 122, "2.0")}${redText(296, 166, ".5", `transform="rotate(-90 296 166)"`)}
      ${redText(435, 243, "1.0")}${redText(435, 506, "2.0")}
      ${redText(106, 452, ".7", `transform="rotate(-90 106 452)"`)}${redText(768, 321, "3.0")}
    </g>
    <g fill="#52b043" stroke="#2b6a20" stroke-width="2.500">
      <circle cx="557" cy="146" r="8"/><circle cx="768" cy="149" r="8"/>
      <circle cx="730" cy="495" r="8"/><circle cx="768" cy="490" r="8"/>
    </g>
    <path d="M665 140V172L673 165 680 180 688 176 681 162 690 160z" fill="#e2e2e2" stroke="#8a8a8a" stroke-width="2"/>
  </g>`;

const sideView = `
  <g transform="translate(760 440) scale(.33333)">
    <rect x="65" y="148" width="465" height="347" fill="#a0a0a0" stroke="#111" stroke-width="4.500"/>
    <path d="M65 413H530" stroke="#111" stroke-width="4.500"/>
    <path d="M65 205H182M415 205H530M128 416V493M186 416V493M407 416V493M465 416V493" stroke="#333" stroke-width="3" stroke-dasharray="8 4" fill="none"/>
    <rect x="182" y="206" width="233" height="116" fill="${SHEET}" stroke="#111" stroke-width="5"/>
    <g stroke="${RED}" stroke-width="3.500" fill="none">
      <path d="M65 112V148M530 112V148M65 122H278M316 122H530"/>
      <path d="M261 148V206"/>
      <path d="M155 204H182M155 322H182M160 204V244M160 280V322"/>
      <path d="M182 326V358M413 326V358M182 350H278M316 350H413"/>
    </g>
    <g font-family="Liberation Sans">
      ${redText(297, 122, "4.0")}${redText(267, 175, ".5")}${redText(160, 262, "1.0", `transform="rotate(-90 160 262)"`)}${redText(297, 350, "2.0")}
    </g>
    <g fill="none" stroke="#222">
      <path d="M618 434H1080M618 434V583M722 434V583M782 434V583" stroke-width="4"/>
      <path d="M618 458H782M618 478H782M618 502H782M618 524H782M618 545H782M618 568H782" stroke="#555" stroke-width="2.500"/>
      <path d="M782 470H1080M782 537H1080M782 568H1080M812 537V568M868 537V568M1048 537V568M848 568V583M955 568V583M995 568V583M1037 568V583" stroke="#444" stroke-width="2.500"/>
    </g>
    <g font-family="Liberation Sans" fill="#333" font-size="8">
      <text x="621" y="441">DRAWN</text>
      <text x="621" y="455" font-size="8.500">LUIS DANIEL ALBERTO</text>
      <text x="727" y="453" font-size="9" font-weight="bold">08/08/2018</text>
      <text x="621" y="465">CHECKED</text>
      <text x="621" y="484">QA</text>
      <text x="621" y="506">MFG</text>
      <text x="621" y="530">APPROVED</text>
      <text x="785" y="452">TITLE</text>
      <text x="785" y="477">SCALE</text>
      <text x="785" y="544">SIZE</text>
      <text x="872" y="544">DWG NO</text>
      <text x="1054" y="544">REV</text>
      <text x="792" y="564" font-size="14">D</text>
      <text x="871" y="566" font-size="15.500">EJERCICIO 3 INVENTOR</text>
      <text x="785" y="576">SCALE</text>
      <text x="812" y="579" font-size="11">1 / 1</text>
      <text x="960" y="579">SHEET</text>
      <text x="1015" y="579">of</text>
    </g>
  </g>`;

customElements.define("inv-sheet", class extends InvElement {
  get style_() {
    return `
      :host { position: absolute; left: 251px; top: 117px; width: 673px; height: 435px; display: block; background: ${SHEET}; }
      svg { display: block; font-family: "Liberation Sans", sans-serif; }
      .rl { font-size: 6.500px; fill: #7a7a72; text-anchor: middle; }
    `;
  }
  get markup() {
    return `<svg width="673" height="435" viewBox="456 219 673 435">
      <defs>
        <linearGradient id="wall" x1="0" y1="0" x2="1" y2="1"><stop offset="0" stop-color="#666"/><stop offset="1" stop-color="#474747"/></linearGradient>
        <linearGradient id="foot" x1="0" y1="0" x2="1" y2="0"><stop offset="0" stop-color="#5a5a5a"/><stop offset=".5" stop-color="#444"/><stop offset="1" stop-color="#666"/></linearGradient>
        <linearGradient id="endf" x1="0" y1="1" x2="1" y2="0"><stop offset="0" stop-color="#8e8e8e"/><stop offset="1" stop-color="#868686"/></linearGradient>
      </defs>
      <rect x="466" y="238" width="654" height="396.500" fill="none" stroke="#1c1c1c" stroke-width="1.600"/>
      ${rulerMarks()}${topView}${isoView}${frontView}${sideView}
    </svg>`;
  }
});

/*************************** STATUS BAR ***************************/
customElements.define("inv-status", class extends InvElement {
  get style_() {
    return `
      :host { display: flex; justify-content: space-between; align-items: center; background: #f1f1f1; font-size: ${UI_SIZE}; color: #555; border-top: 1px solid #c8c8c8; box-sizing: border-box; padding-right: 16px; }
    `;
  }
  get markup() { return `<span>dy</span><span>1</span>`; }
});
</script>
</body>
</html>
